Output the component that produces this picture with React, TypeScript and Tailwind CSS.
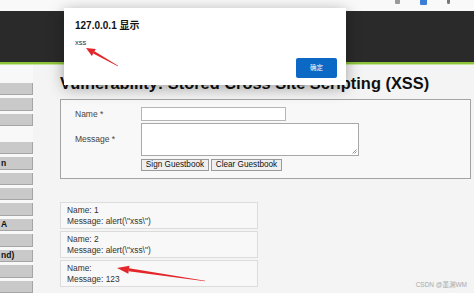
import React from "react";

const font = { fontFamily: '"Liberation Sans", Arial, "Noto Sans CJK SC", sans-serif' };

function SideItem({ label }: { label: string }) {
  return (
    <div className="h-[13px] w-[33px] bg-[#c9c9c9] border-r border-b border-[#a5a5a5] flex items-center pl-[1px] text-[8.5px] font-bold text-[#111] leading-none overflow-hidden whitespace-nowrap">
      {label}
    </div>
  );
}

function Entry({ name, msg }: { name: string; msg: string }) {
  return (
    <div className="w-[198px] bg-[#f8f8f8] border border-[#dcdcdc] px-[6px] py-[2px] text-[8.4px] leading-[10.5px] text-[#333]">
      <div>Name: {name}</div>
      <div>Message: {msg}</div>
    </div>
  );
}

export default function App() {
  const top = ["", "", ""];
  const bottom = ["", "n", "", "", "", "A", "", "nd)", "", ""];
  return (
    <div className="relative w-[474px] h-[293px] overflow-hidden bg-[#f4f4f4]" style={font}>
      {/* browser strip */}
      <div className="h-[11px] bg-[#f9f9f9] flex items-start justify-end gap-[20px] pr-[24px]">
        <div className="w-[5px] h-[4px] bg-[#9a9a9a] rounded-b-[1px]" />
        <div className="w-[7px] h-[5px] bg-[#3d7fd8] rounded-b-[1px]" />
        <div className="w-[3px] h-[4px] bg-[#777] rounded-b-full" />
      </div>
      {/* header */}
      <div className="h-[51px] bg-[#2a2a2a]" />
      <div className="h-[2px] bg-[#8cc43c]" />
      <div className="h-[1px] bg-[#c7e49a]" />
      {/* body */}
      <div className="flex">
        <div className="w-[33px] bg-[#f8f8f8] pt-[18px] flex flex-col gap-[3px] h-[228px]">
          {top.map((l, i) => (
            <SideItem key={"t" + i} label={l} />
          ))}
          <div className="h-[10px]" />
          {bottom.map((l, i) => (
            <SideItem key={"b" + i} label={l} />
          ))}
        </div>
        <div className="flex-1 pl-[27px] pr-[3px]">
          <h1 className="mt-[8px] text-[16.4px] leading-[20px] font-bold text-[#111] whitespace-nowrap">
            Vulnerability: Stored Cross Site Scripting (XSS)
          </h1>
          <div className="mt-[6px] h-[80px] border border-[#a3a3a3] bg-[#f8f8f8] pt-[7px] pl-[14px] flex flex-col gap-[2px]">
            <div className="flex items-center">
              <div className="w-[66px] text-[8.5px] text-[#444]">Name *</div>
              <div className="w-[145px] h-[14px] bg-white border border-[#b5b5b5]" />
            </div>
            <div className="flex items-center">
              <div className="w-[66px] text-[8.5px] text-[#444]">Message *</div>
              <div className="relative w-[218px] h-[33px] bg-white border border-[#a8a8a8]">
                <svg className="absolute right-[1px] bottom-[1px]" width="5" height="5" viewBox="0 0 5 5">
                  <path d="M4.5 0.5 L0.5 4.5 M4.5 2.5 L2.5 4.5" stroke="#777" strokeWidth="0.8" />
                </svg>
              </div>
            </div>
            <div className="flex mt-[1px] ml-[66px] gap-[2px]">
              <div className="h-[12px] w-[68px] bg-[#efefef] border border-[#9a9a9a] flex items-center justify-center text-[8.2px] text-[#111] whitespace-nowrap">
                Sign Guestbook
              </div>
              <div className="h-[12px] w-[71px] bg-[#efefef] border border-[#9a9a9a] flex items-center justify-center text-[8.2px] text-[#111] whitespace-nowrap">
                Clear Guestbook
              </div>
            </div>
          </div>
          <div className="mt-[23px] flex flex-col gap-[2px]">
            <Entry name="1" msg={'alert(\\"xss\\")'} />
            <Entry name="2" msg={'alert(\\"xss\\")'} />
            <Entry name="" msg="123" />
          </div>
        </div>
      </div>

      {/* alert dialog */}
      <div className="absolute left-[64px] top-[8px] w-[282px] h-[77px] bg-white shadow-[0_3px_14px_rgba(0,0,0,0.35)] pt-[12px] pl-[11px] pr-[9px] flex flex-col">
        <div className="text-[10px] leading-[12px] font-bold text-[#111]">127.0.0.1 显示</div>
        <div className="mt-[6px] text-[7.5px] leading-[10px] text-[#333]">xss</div>
        <div className="mt-[10px] flex justify-end">
          <div className="w-[41px] h-[20px] bg-[#0b68c4] rounded-[2px] flex items-center justify-center text-[6.5px] text-white">
            确定
          </div>
        </div>
      </div>

      {/* red arrows */}
      <svg className="absolute left-0 top-0 pointer-events-none" width="474" height="293" viewBox="0 0 474 293">
        <polygon points="86,48 95.8,48.9 91.9,55.9" fill="#e3262a" />
        <polygon points="94.5,51.3 93.2,53.5 117.85,66.26 118.15,65.74" fill="#e3262a" />
        <polygon points="117,268 129.45,265.79 128.29,273.71" fill="#e3262a" />
        <polygon points="129.09,268.27 128.65,271.23 204.96,281.3 205.04,280.7" fill="#e3262a" />
      </svg>

      {/* watermark */}
      <div className="absolute right-[7px] bottom-[5px] text-[6.5px] leading-none text-[#a9a9a9] whitespace-nowrap">
        CSDN @墨渊WM
      </div>
    </div>
  );
}
